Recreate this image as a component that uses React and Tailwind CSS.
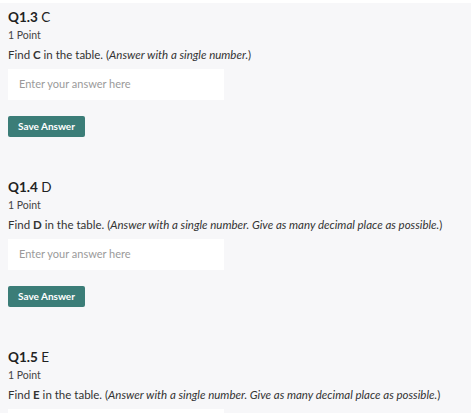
import React from "react";

function Question({ num, letter, extra }) {
  return (
    <div className="h-[170px] pl-[8px] pt-[6px]">
      <div className="text-[13.5px] leading-[17px] text-[#222]">
        <span className="font-bold">{num}</span> {letter}
      </div>
      <div className="text-[10.5px] leading-[14px] mt-[2px] text-[#444]">1 Point</div>
      <div className="text-[11.5px] leading-[14px] mt-[6px] text-[#333]">
        Find <span className="font-bold">{letter}</span> in the table. (
        <span className="italic">
          Answer with a single number.{extra ? " Give as many decimal place as possible." : ""}
        </span>
        )
      </div>
      <div className="mt-[7px] w-[216px] h-[31px] bg-white flex items-center pl-[11px] text-[11px] text-[#9a9a9a]">
        Enter your answer here
      </div>
      <button className="mt-[16px] w-[77px] h-[21px] bg-[#3b7d78] text-white text-[10px] font-bold rounded-[2px] flex items-center justify-center">
        Save Answer
      </button>
    </div>
  );
}

export default function App() {
  return (
    <div
      className="w-[474px] h-[413px] overflow-hidden bg-white"
      style={{ fontFamily: "Lato, 'Open Sans', sans-serif" }}
    >
      <div className="mt-[3px] mr-[3px] h-[410px] bg-[#f7f7f9] overflow-hidden">
        <Question num="Q1.3" letter="C" extra={false} />
        <Question num="Q1.4" letter="D" extra={true} />
        <Question num="Q1.5" letter="E" extra={true} />
      </div>
    </div>
  );
}
